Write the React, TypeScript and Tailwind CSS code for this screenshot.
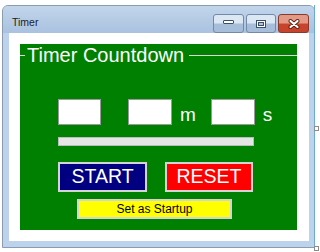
import React from 'react';

const CaptionGlyph = ({ kind }: { kind: 'min' | 'max' | 'close' }) => {
  if (kind === 'min') {
    return <span className="block w-[11px] h-[4px] mt-[5px] bg-white border border-[#3b4f6b] rounded-[1px]" />;
  }
  if (kind === 'max') {
    return (
      <span className="block w-[10px] h-[8px] border border-[#3b4f6b] bg-white p-[1px]">
        <span className="block w-full h-full bg-[#aec3de] border border-[#3b4f6b]" />
      </span>
    );
  }
  return (
    <svg width="12" height="10" viewBox="0 0 12 10">
      <path d="M2.5 2 L9.5 8 M9.5 2 L2.5 8" stroke="#5a1e12" strokeWidth="4" strokeLinecap="round" />
      <path d="M2.5 2 L9.5 8 M9.5 2 L2.5 8" stroke="#ffffff" strokeWidth="2.2" strokeLinecap="round" />
    </svg>
  );
};

const App = () => {
  return (
    <div className="w-[320px] h-[252px] bg-white overflow-hidden relative" style={{ fontFamily: '"Liberation Sans", Arial, sans-serif' }}>
      <div className="ml-[2px] mt-[5px] w-[313px] h-[243px] border border-[#8b9cb2] rounded-t-[6px] bg-[#bcd3eb] flex flex-col">
        {/* title bar */}
        <div className="h-[27px] flex items-start justify-between rounded-t-[5px] bg-linear-to-b from-[#c2d5eb] to-[#a9c2df] pl-[9px] pr-[5px]">
          <span className="mt-[11px] text-[10.5px] leading-none text-[#222]">Timer</span>
          <div className="flex mt-[8px] gap-[2px]">
            <div className="w-[31px] h-[19px] flex justify-center rounded-[3px] border border-[#7389a8] bg-linear-to-b from-[#dce7f4] from-45% to-[#a7bedb] to-55%">
              <CaptionGlyph kind="min" />
            </div>
            <div className="w-[30px] h-[19px] flex items-center justify-center rounded-[3px] border border-[#7389a8] bg-linear-to-b from-[#dce7f4] from-45% to-[#a7bedb] to-55%">
              <CaptionGlyph kind="max" />
            </div>
            <div className="w-[31px] h-[19px] flex items-center justify-center rounded-[3px] border border-[#8a3a2c] bg-linear-to-b from-[#e29a86] from-45% to-[#c8432b] to-55%">
              <CaptionGlyph kind="close" />
            </div>
          </div>
        </div>
        {/* client */}
        <div className="ml-[6px] mr-[5px] h-[208px] bg-white pt-[11px]">
          <div className="ml-[11px] mr-[12px] h-[186px] bg-[#008000] flex flex-col">
            <div className="h-[22px] flex items-center">
              <span className="w-[5px] h-px bg-[#d8d8d8]" />
              <span className="ml-[2px] text-[20px] leading-none text-white">Timer Countdown</span>
              <span className="ml-[5px] flex-1 h-px bg-[#d8d8d8]" />
            </div>
            <div className="mt-[33px] pl-[38px] flex items-start h-[26px]">
              <div className="w-[43px] h-[26px] bg-white border border-[#9a9a9a]" />
              <div className="ml-[27px] w-[44px] h-[26px] bg-white border border-[#9a9a9a]" />
              <span className="ml-[8px] pt-[6px] text-[19px] leading-none text-white">m</span>
              <div className="ml-[15px] w-[44px] h-[26px] bg-white border border-[#9a9a9a]" />
              <span className="ml-[8px] pt-[6px] text-[19px] leading-none text-white">s</span>
            </div>
            <div className="mt-[12px] ml-[38px] w-[196px] h-[9px] bg-[#e6e6e6] border border-[#bcbcbc]" />
            <div className="mt-[16px] ml-[38px] flex gap-[18px]">
              <div className="w-[89px] h-[30px] bg-[#000080] border-2 border-[#d4d4d4] flex items-center justify-center text-[19.5px] leading-none text-white">START</div>
              <div className="w-[88px] h-[30px] bg-[#ff0000] border-2 border-[#d4d4d4] flex items-center justify-center text-[19.5px] leading-none text-white">RESET</div>
            </div>
            <div className="mt-[7px] ml-[57px] w-[155px] h-[20px] bg-[#ffff00] border-2 border-[#d4d4d4] flex items-center justify-center text-[12px] leading-none text-black">Set as Startup</div>
          </div>
        </div>
      </div>
      {/* selection handles */}
      <span className="absolute left-[314px] top-[5px] w-px h-[243px] bg-[#6aaad6]" />
      <span className="absolute left-[314px] top-[126px] w-[5px] h-[5px] bg-white border border-[#8c8c8c]" />
      <span className="absolute left-[314px] top-[246px] w-[5px] h-[5px] bg-white border border-[#8c8c8c]" />
    </div>
  );
};

export default App;
